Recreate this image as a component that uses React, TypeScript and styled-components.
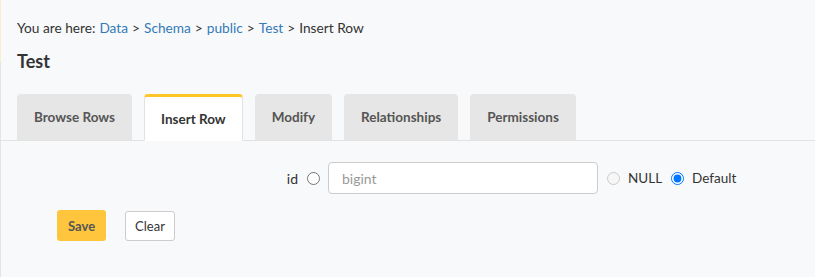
import React from "react";
import styled, { createGlobalStyle } from "styled-components";

const GlobalStyle = createGlobalStyle`
  html, body { margin: 0; padding: 0; }
  body {
    background: #f8f9fa;
    font-family: Lato, "Open Sans", sans-serif;
    color: #333;
  }
`;

const Layout = styled.div`
  display: flex;
  min-height: 277px;
`;

const SideEdge = styled.div`
  width: 1px;
  flex: none;
  background: #e4e4e4;
  display: flex;
  flex-direction: column;
`;

const SideHighlight = styled.div`
  height: 62px;
  background: #fbefc9;
`;

const Main = styled.div`
  flex: 1;
  display: flex;
  flex-direction: column;
`;

const Header = styled.div`
  padding: 18px 16px 0;
`;

const Breadcrumb = styled.div`
  font-size: 13.7px;
  line-height: 20px;
  color: #333;
  display: flex;
  gap: 4px;
`;

const Crumb = styled.a`
  color: #337ab7;
  text-decoration: none;
`;

const Heading = styled.h2`
  margin: 12px 0 0;
  font-size: 18px;
  line-height: 22px;
  font-weight: 700;
  color: #333;
`;

const TabBar = styled.div`
  margin-top: 22px;
  padding-left: 16px;
  display: flex;
  gap: 12px;
  border-bottom: 1px solid #e2e2e2;
`;

const Tab = styled.div<{ $active?: boolean }>`
  box-sizing: border-box;
  padding: 0 ${(p) => (p.$active ? "16px" : "17px")};
  display: flex;
  align-items: center;
  justify-content: center;
  font-size: 13.5px;
  font-weight: 700;
  border-radius: 4px 4px 0 0;
  margin-bottom: -1px;
  color: ${(p) => (p.$active ? "#333" : "#555")};
  background: ${(p) => (p.$active ? "#fff" : "#e6e6e6")};
  border: ${(p) => (p.$active ? "1px solid #e2e2e2" : "none")};
  border-top: ${(p) => (p.$active ? "3px solid #ffc627" : "none")};
  border-bottom: ${(p) => (p.$active ? "1px solid #fff" : "none")};
  height: ${(p) => (p.$active ? "47px" : "46px")};
`;

const Form = styled.div`
  padding: 21px 0 0 16px;
  display: flex;
  flex-direction: column;
`;

const FieldRow = styled.div`
  display: flex;
  align-items: center;
  height: 32px;
`;

const Label = styled.label`
  width: 281px;
  text-align: right;
  font-size: 14px;
  font-weight: 400;
  color: #333;
`;

const Radio = styled.input.attrs({ type: "radio" })`
  width: 13px;
  height: 13px;
  margin: 0;
`;

const FirstRadio = styled(Radio)`
  margin-left: 9px;
`;

const TextInput = styled.input`
  box-sizing: border-box;
  width: 270px;
  height: 32px;
  margin-left: 8px;
  padding: 0 13px;
  border: 1px solid #ccc;
  border-radius: 4px;
  background: #fff;
  font-family: Lato, "Open Sans", sans-serif;
  font-size: 14px;
  color: #333;
  &::placeholder { color: #999; }
  outline: none;
`;

const Option = styled.label`
  display: flex;
  align-items: center;
  gap: 8px;
  margin-left: 9px;
  font-size: 13.5px;
  color: #333;
`;

const Actions = styled.div`
  margin-top: 16px;
  padding-left: 40px;
  display: flex;
  gap: 19px;
  align-items: center;
`;

const SaveButton = styled.button`
  height: 31px;
  padding: 0 11px;
  background: #fec53d;
  border: none;
  border-radius: 3px;
  font-family: Lato, "Open Sans", sans-serif;
  font-size: 13px;
  font-weight: 700;
  color: #555;
`;

const ClearButton = styled.button`
  height: 30px;
  padding: 0 9px;
  background: #fff;
  border: 1px solid #ccc;
  border-radius: 3px;
  font-family: Lato, "Open Sans", sans-serif;
  font-size: 13px;
  color: #333;
`;

export default function App() {
  return (
    <>
      <GlobalStyle />
      <Layout>
        <SideEdge>
          <SideHighlight />
        </SideEdge>
        <Main>
          <Header>
            <Breadcrumb>
              <span>You are here:</span>
              <Crumb>Data</Crumb>
              <span>&gt;</span>
              <Crumb>Schema</Crumb>
              <span>&gt;</span>
              <Crumb>public</Crumb>
              <span>&gt;</span>
              <Crumb>Test</Crumb>
              <span>&gt;</span>
              <span>Insert Row</span>
            </Breadcrumb>
            <Heading>Test</Heading>
          </Header>
          <TabBar>
            <Tab>Browse Rows</Tab>
            <Tab $active>Insert Row</Tab>
            <Tab>Modify</Tab>
            <Tab>Relationships</Tab>
            <Tab>Permissions</Tab>
          </TabBar>
          <Form>
            <FieldRow>
              <Label>id</Label>
              <FirstRadio name="id" />
              <TextInput placeholder="bigint" />
              <Option>
                <Radio name="id" disabled />
                NULL
              </Option>
              <Option>
                <Radio name="id" defaultChecked />
                Default
              </Option>
            </FieldRow>
            <Actions>
              <SaveButton>Save</SaveButton>
              <ClearButton>Clear</ClearButton>
            </Actions>
          </Form>
        </Main>
      </Layout>
    </>
  );
}
